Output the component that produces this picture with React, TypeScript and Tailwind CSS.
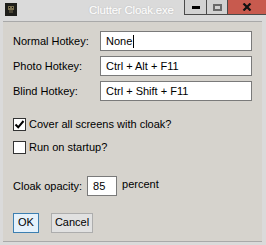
import React from "react";

const font = { fontFamily: '"Liberation Sans", Arial, sans-serif' };

function TextBox({ value, caret, className }: { value: string; caret?: boolean; className: string }) {
  return (
    <div className={`h-[20px] bg-white border border-[#7a7a7a] flex items-center pl-[5px] text-[11px] text-black ${className}`}>
      <span>{value}</span>
      {caret && <span className="inline-block w-px h-[13px] bg-black ml-px" />}
    </div>
  );
}

function Check({ checked, label }: { checked?: boolean; label: string }) {
  return (
    <div className="flex items-center h-[13px]">
      <div className="w-[13px] h-[13px] bg-white border border-[#333] flex items-center justify-center">
        {checked && (
          <svg width="11" height="11" viewBox="0 0 11 11">
            <path d="M1.5 5.5 L4.2 8.3 L9.5 2" stroke="#000" strokeWidth="2" fill="none" />
          </svg>
        )}
      </div>
      <span className="ml-[3px] text-[11px] text-black">{label}</span>
    </div>
  );
}

export default function App() {
  return (
    <div className="w-[266px] h-[245px] bg-[#dadada] flex flex-col overflow-hidden" style={font}>
      {/* Title bar */}
      <div className="h-[21px] flex items-start relative shrink-0">
        <div className="ml-[5px] mt-[3px] w-[12px] h-[13px] bg-[#1e1e1a] flex items-center justify-center">
          <svg width="8" height="9" viewBox="0 0 8 9">
            <rect x="1" y="1" width="6" height="4" fill="#7a7050" />
            <rect x="2" y="2" width="1" height="1" fill="#111" />
            <rect x="5" y="2" width="1" height="1" fill="#111" />
            <rect x="2" y="5" width="4" height="3" fill="#4a4535" />
          </svg>
        </div>
        <div
          className="absolute left-[89px] top-[3px] text-[11.5px] leading-[15px] text-white tracking-[-0.2px]"
          style={{ fontFamily: '"Liberation Sans", Arial, sans-serif', textShadow: "0 0 2px rgba(0,0,0,0.15)" }}
        >
          Clutter Cloak.exe
        </div>
        <div className="ml-auto flex h-[15px]">
          <div className="w-[22px] h-[15px] bg-[#d2d2d2] border-l border-b border-[#4a4a4a] flex items-center justify-center">
            <div className="w-[8px] h-[3px] bg-black" />
          </div>
          <div className="w-[21px] h-[15px] bg-[#d2d2d2] border-l border-b border-[#4a4a4a] flex items-center justify-center">
            <div className="w-[9px] h-[7px] border-[2px] border-[#6a6a6a]" />
          </div>
          <div className="w-[39px] h-[15px] bg-[#c85a4e] border-l border-b border-[#4a4a4a] flex items-center justify-center">
            <svg width="10" height="8" viewBox="0 0 10 8">
              <path d="M1.5 0.5 L8.5 7.5 M8.5 0.5 L1.5 7.5" stroke="#111" strokeWidth="2.2" />
            </svg>
          </div>
        </div>
      </div>
      {/* Client area */}
      <div className="ml-[3px] mr-[4px] h-[221px] border-t border-b border-[#a9a9a9] bg-[#d6d3cd] flex flex-col pl-[10px] pr-[10px] pt-[9px] text-[11px] text-black">
        <div className="flex items-center">
          <span className="w-[87px]">Normal Hotkey:</span>
          <TextBox value="None" caret className="flex-1" />
        </div>
        <div className="flex items-center mt-[5px]">
          <span className="w-[87px]">Photo Hotkey:</span>
          <TextBox value="Ctrl + Alt + F11" className="flex-1" />
        </div>
        <div className="flex items-center mt-[5px]">
          <span className="w-[87px]">Blind Hotkey:</span>
          <TextBox value="Ctrl + Shift + F11" className="flex-1" />
        </div>
        <div className="mt-[17px]">
          <Check checked label="Cover all screens with cloak?" />
        </div>
        <div className="mt-[10px]">
          <Check label="Run on startup?" />
        </div>
        <div className="flex items-center mt-[22px]">
          <span className="mb-[1px]">Cloak opacity:</span>
          <TextBox value="85" className="w-[30px] ml-[5px] pl-[2px]" />
          <span className="ml-[5px] mb-[4px]">percent</span>
        </div>
        <div className="flex mt-[16px] gap-[12px]">
          <div className="w-[26px] h-[20px] border border-[#3c7fb1] bg-[#e5f1fb] flex items-center justify-center">OK</div>
          <div className="w-[42px] h-[20px] border border-[#adadad] bg-[#e1e1e1] flex items-center justify-center">Cancel</div>
        </div>
      </div>
    </div>
  );
}
